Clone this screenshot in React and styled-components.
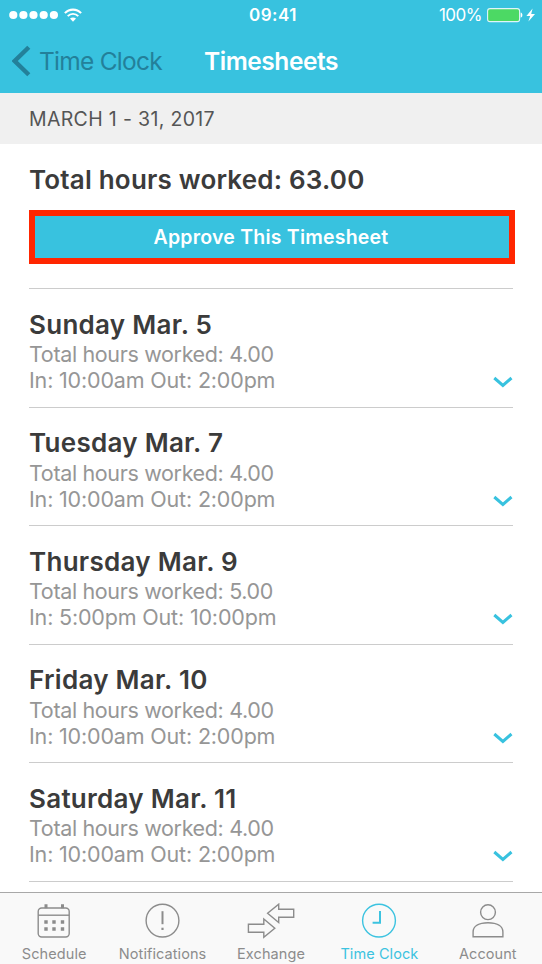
import React from 'react';
import styled, { createGlobalStyle } from 'styled-components';

const BLUE = '#38c2df';
const GREY = '#969696';

const GlobalStyle = createGlobalStyle`
  * {
    box-sizing: border-box;
  }

  body {
    margin: 0;
    background: #fff;
    font-family: Inter, 'Liberation Sans', sans-serif;
    -webkit-font-smoothing: antialiased;
  }
`;

const Screen = styled.div`
  display: flex;
  flex-direction: column;
  width: 542px;
  height: 964px;
  overflow: hidden;
`;

const Header = styled.header`
  flex: none;
  height: 93px;
  background: ${BLUE};
  color: #fff;
`;

const StatusBar = styled.div`
  display: grid;
  grid-template-columns: 1fr auto 1fr;
  align-items: center;
  height: 30px;
  padding: 0 6px 0 9px;
`;

const Signal = styled.div`
  display: flex;
  align-items: center;
  gap: 6px;
`;

const Time = styled.div`
  padding-left: 1px;
  font-size: 17px;
  font-weight: 600;
  letter-spacing: 0.5px;
`;

const Battery = styled.div`
  display: flex;
  align-items: center;
  justify-content: flex-end;
  gap: 5px;
  font-size: 17px;
  letter-spacing: -0.5px;
`;

const NavBar = styled.div`
  display: grid;
  grid-template-columns: 1fr auto 1fr;
  align-items: center;
  height: 62px;
  padding: 0 12px;
`;

const Back = styled.a`
  display: flex;
  align-items: center;
  gap: 8px;
  color: #23809a;
  font-size: 24.5px;
  letter-spacing: -0.75px;
  white-space: nowrap;
`;

const Title = styled.h1`
  margin: 0;
  font-size: 24.5px;
  font-weight: 600;
  letter-spacing: -0.45px;
`;

const Period = styled.div`
  flex: none;
  height: 51px;
  padding-left: 29px;
  background: #f0f0f0;
  color: #555;
  font-size: 19.5px;
  line-height: 53px;
  letter-spacing: 0.33px;
`;

const Content = styled.main`
  flex: 1;
  min-height: 0;
  padding: 0 29px;
  overflow: hidden;
`;

const Total = styled.h2`
  margin: 0;
  padding-top: 18px;
  height: 66px;
  color: #3b3b3b;
  font-size: 26px;
  font-weight: 600;
  line-height: 36px;
  letter-spacing: 0.2px;
`;

const ApproveButton = styled.button`
  display: block;
  width: 486px;
  height: 54px;
  margin: 0 0 24px;
  padding: 0 2px 0 0;
  border: 6px solid #ff2600;
  background: ${BLUE};
  color: #fff;
  font: inherit;
  font-size: 19.5px;
  font-weight: 600;
  letter-spacing: 0.22px;
`;

const Days = styled.ul`
  margin: 0;
  padding: 0;
  border-top: 1px solid #ccc;
  list-style: none;
`;

const Day = styled.li`
  display: flex;
  align-items: flex-end;
  justify-content: space-between;
  height: 118.5px;
  padding-bottom: 13.5px;
  border-bottom: 1px solid #ccc;
`;

const DayName = styled.h3`
  margin: 0;
  color: #3b3b3b;
  font-size: 26px;
  font-weight: 600;
  line-height: 32.5px;
  letter-spacing: 0.28px;
`;

const DayLine = styled.div`
  color: ${GREY};
  font-size: 21.5px;
  line-height: 26px;
  letter-spacing: ${props => (props.$tight ? '-0.35px' : '-0.17px')};
`;

const Expand = styled.svg`
  flex: none;
  margin-bottom: 4px;
`;

const TabBar = styled.nav`
  display: grid;
  grid-template-columns: repeat(5, 1fr);
  flex: none;
  height: 72px;
  border-top: 1px solid #a8a8a8;
  background: #f9f9f9;
`;

const Tab = styled.a`
  display: flex;
  flex-direction: column;
  align-items: center;
  padding-top: 10px;
  color: ${props => (props.$active ? '#3cc3e0' : '#8c8c8c')};
  font-size: 14.5px;
  line-height: 18px;
  letter-spacing: 0.08px;

  svg {
    display: block;
    margin-bottom: 6px;
    fill: none;
    stroke: currentColor;
    stroke-width: 1.4;
  }
`;

const days = [
  { name: 'Sunday Mar. 5', hours: '4.00', start: '10:00am', end: '2:00pm' },
  { name: 'Tuesday Mar. 7', hours: '4.00', start: '10:00am', end: '2:00pm' },
  { name: 'Thursday Mar. 9', hours: '5.00', start: '5:00pm', end: '10:00pm' },
  { name: 'Friday Mar. 10', hours: '4.00', start: '10:00am', end: '2:00pm' },
  { name: 'Saturday Mar. 11', hours: '4.00', start: '10:00am', end: '2:00pm' },
];

const CalendarIcon = () => (
  <svg width="34" height="36" viewBox="0 0 34 36">
    <rect x="1.2" y="5" width="31" height="29" rx="3.5" />
    <path d="M1.2 12.2h31" />
    <path d="M9 1.3v4M25.5 1.3v4" strokeWidth="3" />
    <path
      d="M7.3 19h3.4M15.3 19h3.4M23.8 19h3.4M7.3 26h3.4M15.3 26h3.4M23.8 26h3.4"
      strokeWidth="3.4"
    />
  </svg>
);

const AlertIcon = () => (
  <svg width="36" height="36" viewBox="0 0 36 36">
    <circle cx="17.5" cy="17.6" r="16.4" />
    <path d="M17.5 8.2v13" strokeWidth="2" />
    <path d="M17.5 24.7v2.3" strokeWidth="2.2" />
  </svg>
);

const ExchangeIcon = () => (
  <svg width="48" height="36" viewBox="0 0 48 36">
    <path d="M46.7 6.2H31.7V1.2L20.6 10.3L31.7 19.5V14.3H46.7Z" />
    <path d="M1.4 21.2H16.8V16L27.8 25.2L16.8 34.3V29.3H1.4Z" />
  </svg>
);

const ClockIcon = () => (
  <svg width="36" height="36" viewBox="0 0 36 36">
    <circle cx="18" cy="17.6" r="16.4" />
    <path d="M19 7.9v11.8h-7.4" strokeWidth="2" />
  </svg>
);

const AccountIcon = () => (
  <svg width="34" height="36" viewBox="0 0 34 36">
    <circle cx="17" cy="9.2" r="7.4" />
    <path d="M2.1 33.7V29C2.1 23 8 19.7 17 19.7S31.9 23 31.9 29V33.7Z" />
  </svg>
);

const tabs = [
  { label: 'Schedule', Icon: CalendarIcon },
  { label: 'Notifications', Icon: AlertIcon },
  { label: 'Exchange', Icon: ExchangeIcon },
  { label: 'Time Clock', Icon: ClockIcon, active: true },
  { label: 'Account', Icon: AccountIcon },
];

const SignalDots = () => (
  <svg width="49" height="10" viewBox="0 0 49 10" fill="#fff">
    {[4.3, 14.4, 24.5, 34.7, 44.9].map(x => (
      <circle key={x} cx={x} cy="5" r="4.1" />
    ))}
  </svg>
);

const WifiIcon = () => (
  <svg width="18" height="14" viewBox="0 0 18 14" fill="none" stroke="#fff">
    <path d="M.9 5.1C5.3.4 12.7.4 17.1 5.1" strokeWidth="2.1" />
    <path d="M3.7 8.1C6.6 5.1 11.4 5.1 14.3 8.1" strokeWidth="1.9" />
    <path d="M9 13.7L6 10.6C7.7 9 10.3 9 12 10.6Z" fill="#fff" stroke="none" />
  </svg>
);

const BatteryIcon = () => (
  <svg width="49" height="16" viewBox="0 0 49 16">
    <rect x=".6" y="1.6" width="32" height="13" rx="2.4" fill="#4cd964" stroke="#dff5fa" strokeWidth="1.1" />
    <path d="M33.6 5.6c2.4 .3 2.4 4.8 0 5.1z" fill="#fff" />
    <path d="M45.6 1.6L39.4 9H43.2L41.4 14.6L48 6.9H44.2Z" fill="#fff" />
  </svg>
);

const DayRow = ({ name, hours, start, end }) => (
  <Day>
    <div>
      <DayName>{name}</DayName>
      <DayLine $tight>Total hours worked: {hours}</DayLine>
      <DayLine>
        In: {start} Out: {end}
      </DayLine>
    </div>
    <Expand width="21" height="14" viewBox="0 0 21 14">
      <path d="M2.3 3L10.9 10.4L19.5 3" fill="none" stroke={BLUE} strokeWidth="3" />
    </Expand>
  </Day>
);

const App = () => (
  <>
    <GlobalStyle />
    <Screen>
      <Header>
        <StatusBar>
          <Signal>
            <SignalDots />
            <WifiIcon />
          </Signal>
          <Time>09:41</Time>
          <Battery>
            100%
            <BatteryIcon />
          </Battery>
        </StatusBar>
        <NavBar>
          <Back>
            <svg width="19" height="32" viewBox="0 0 19 32">
              <path d="M16.8 2.2L2.7 16L16.8 29.8" fill="none" stroke="currentColor" strokeWidth="4.4" />
            </svg>
            Time Clock
          </Back>
          <Title>Timesheets</Title>
        </NavBar>
      </Header>
      <Period>MARCH 1 - 31, 2017</Period>
      <Content>
        <Total>Total hours worked: 63.00</Total>
        <ApproveButton>Approve This Timesheet</ApproveButton>
        <Days>
          {days.map(day => (
            <DayRow key={day.name} {...day} />
          ))}
        </Days>
      </Content>
      <TabBar>
        {tabs.map(({ label, Icon, active }) => (
          <Tab key={label} $active={active}>
            <Icon />
            {label}
          </Tab>
        ))}
      </TabBar>
    </Screen>
  </>
);

export default App;
